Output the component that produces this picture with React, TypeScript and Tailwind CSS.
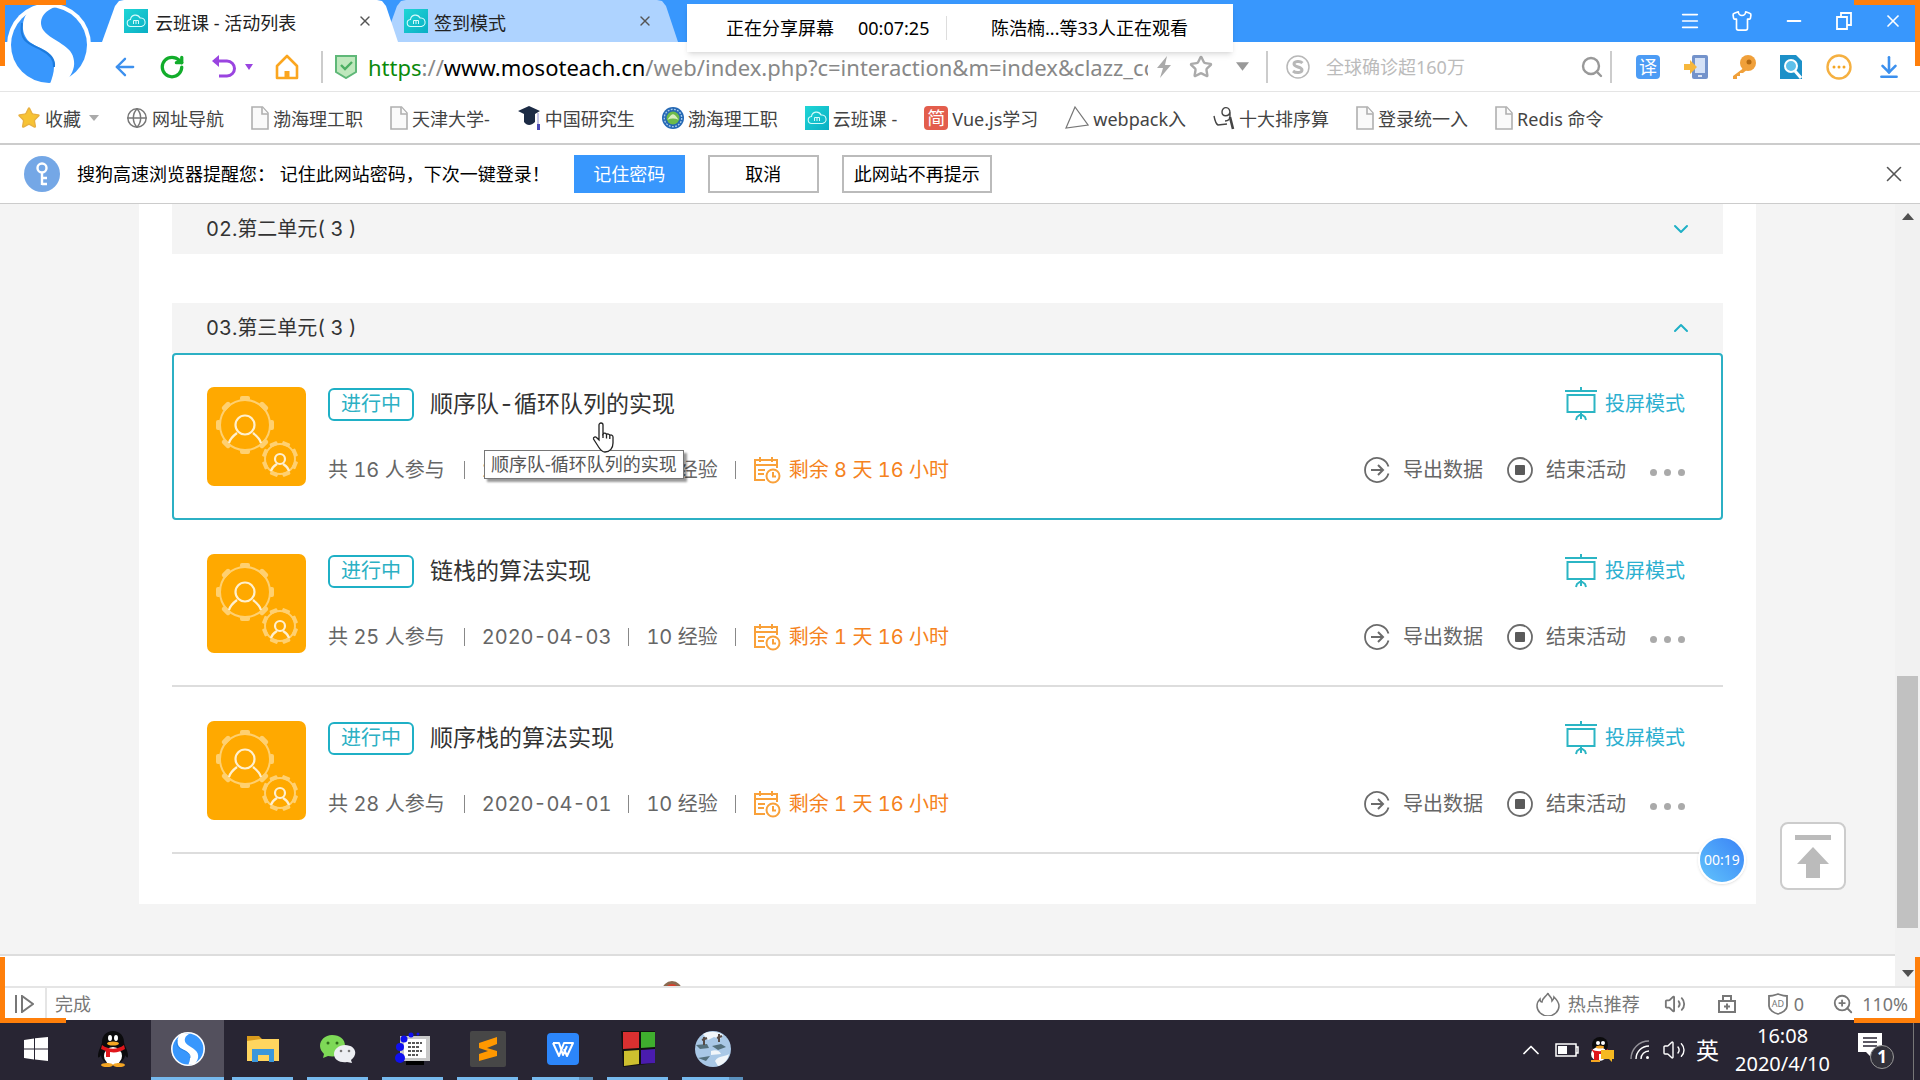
import { useState } from 'react'
import type { ReactNode } from 'react'
import {
  ArrowLeft, ArrowDownToLine, ChevronDown, ChevronUp, Globe, Menu, Minus, RotateCw,
  Search, Shirt, Star, X, ZoomIn, Volume2,
} from 'lucide-react'

type Activity = {
  title: string
  people: number
  date: string
  days: number
}

const activities: Activity[] = [
  { title: '顺序队-循环队列的实现', people: 16, date: '2020-04-10', days: 8 },
  { title: '链栈的算法实现', people: 25, date: '2020-04-03', days: 1 },
  { title: '顺序栈的算法实现', people: 28, date: '2020-04-01', days: 1 },
]

function CloudIcon({ className }: { className: string }) {
  return (
    <svg viewBox="0 0 24 24" className={className}>
      <defs>
        <linearGradient id="cloudBg" x1="0" y1="0" x2="1" y2="1">
          <stop offset="0" stopColor="#1fd6d6" />
          <stop offset="1" stopColor="#0aaec4" />
        </linearGradient>
      </defs>
      <rect width="24" height="24" fill="url(#cloudBg)" />
      <path d="M7 17.500a3.500 3.500 0 0 1-.5-7 5 5 0 0 1 9.500-1.500 4.300 4.300 0 0 1 1.500 8.500z" fill="none" stroke="#d5fbfb" strokeWidth="1.100" />
      <path d="M9.500 15v-3.500h5V15M12 12v3" fill="none" stroke="#d5fbfb" />
    </svg>
  )
}

function DocIcon() {
  return (
    <svg viewBox="0 0 18 24" className="w-[18px] h-6" fill="#fafafa" stroke="#b0b0b0" strokeWidth="1.600">
      <path d="M1 1h10.500L17 7v16H1z" />
      <path d="M11 1v7h6" />
    </svg>
  )
}

function SogouLogo({ className }: { className: string }) {
  return (
    <svg viewBox="0 0 84 84" className={className}>
      <circle cx="42" cy="42" r="42" fill="#fff" />
      <circle cx="42" cy="42" r="38" fill="#3897fd" />
      <path d="M25 4C12 16 14 33 24 40c9 6 24 9 23 24 0 6-2 11-4 17l16-2c5-7 9-13 8-21C66 42 46 39 37 28 31 20 34 9 48 4z" fill="#fff" />
      <path d="M15 20c-3 20 9 21 20 27 8 4 13 9 12 17" fill="none" stroke="#1d7bdd" strokeWidth="2" />
    </svg>
  )
}

function GroupIcon() {
  const teeth = [0, 45, 90, 135, 180, 225, 270, 315]
  return (
    <svg viewBox="0 0 99 99" className="size-[99px] shrink-0" fill="none">
      <rect width="99" height="99" rx="7" fill="#ffa900" />
      <g stroke="#ffd070" strokeWidth="2">
        <circle cx="38" cy="38" r="25" />
        {teeth.map(a => (
          <rect key={a} x="33" y="9" width="10" height="5" rx="2" fill="#ffd070" stroke="none" transform={`rotate(${a} 38 38)`} />
        ))}
        <circle cx="73" cy="72" r="15" />
        {teeth.map(a => (
          <rect key={a} x="69" y="54" width="8" height="4" rx="1" fill="#ffd070" stroke="none" transform={`rotate(${a + 22} 73 72)`} />
        ))}
      </g>
      <g stroke="#fff0cf" strokeWidth="2.200">
        <circle cx="38" cy="38" r="9.500" />
        <path d="M22 56c1-4 4-7 8-10M54 56c-1-4-4-7-8-10" />
        <circle cx="73" cy="72" r="5" />
        <path d="M64 84c1-4 3-5 6-7M82 84c-1-4-3-5-6-7" />
      </g>
    </svg>
  )
}

function ScreenIcon() {
  return (
    <svg viewBox="0 0 32 34" className="w-8 h-[34px]" fill="none" stroke="#2bb5c4" strokeWidth="2">
      <path d="M16 0v4M0 4h32M2.500 8h27v17h-27z" />
      <path d="M16 26v6M11 33l1-3 4-3 4 3 1 3" />
    </svg>
  )
}

function CalendarIcon() {
  return (
    <svg viewBox="0 0 28 28" className="size-7" fill="none" stroke="#f9a13a" strokeWidth="2">
      <path d="M12 24H2V4h22v8M2 9h22M7 1v5M19 1v5M5 14h7M5 18h6" />
      <circle cx="20" cy="20" r="6.500" />
      <path d="M20 16v4.500h3" />
    </svg>
  )
}

function ExportIcon() {
  return (
    <svg viewBox="0 0 26 26" className="size-[26px]" fill="none" stroke="#6b6b6b" strokeWidth="1.800">
      <path d="M24.500 9.500A12 12 0 1 0 24.500 16.500" />
      <path d="M7 13h12M14 8l5 5-5 5" strokeWidth="2" />
    </svg>
  )
}

function StopIcon() {
  return (
    <svg viewBox="0 0 26 26" className="size-[26px]">
      <circle cx="13" cy="13" r="12" fill="none" stroke="#6b6b6b" strokeWidth="1.800" />
      <rect x="8" y="8" width="10" height="10" rx="1" fill="#5a5a5a" />
    </svg>
  )
}

function UnitHeader({ label, open }: { label: string; open?: boolean }) {
  return (
    <button className="flex h-[50px] w-full items-center justify-between bg-[#f4f4f4] pl-[34px] pr-[30px] text-[#333]">
      <span className="font-[Inter,'Noto_Sans_CJK_SC',sans-serif] text-xl tabular-nums">{label}</span>
      {open
        ? <ChevronUp className="size-6 text-[#1fb0c6]" />
        : <ChevronDown className="size-6 text-[#1fb0c6]" />}
    </button>
  )
}

function Divider() {
  return <i className="h-[18px] w-px bg-[#888]" />
}

function ActivityRow({ item, active }: { item: Activity; active?: boolean }) {
  return (
    <li className={active
      ? 'relative flex h-[167px] gap-[22px] rounded-sm border-2 border-[#2cb0c4] pl-[33px] pr-8 pt-8'
      : 'relative flex h-[167px] gap-[22px] border-b-2 border-[#ddd] pl-[35px] pr-[34px] pt-[34px]'}
    >
      <GroupIcon />
      <div className="flex min-w-0 flex-1 flex-col justify-between pb-[31px] font-[Inter,'Noto_Sans_CJK_SC',sans-serif] text-xl tabular-nums text-[#666]">
        <div className="flex h-[34px] items-center justify-between">
          <div className="flex items-center gap-4">
            <span className="flex h-[33px] items-center rounded-md border-2 border-[#1fb0c6] px-[11px] text-[#2cb0c4]">进行中</span>
            <h3 className="text-[23px] text-[#333]">{item.title}</h3>
          </div>
          <button className="mr-1 flex items-center gap-2 text-[#2cb0d0]">
            <ScreenIcon />
            投屏模式
          </button>
        </div>
        <div className="flex h-[34px] items-center justify-between">
          <div className="flex items-center gap-[17px] whitespace-nowrap">
            <span className="pr-[2px]">共 {item.people} 人参与</span>
            <Divider />
            <span>{item.date}</span>
            <Divider />
            <span>10 经验</span>
            <Divider />
            <span className="flex items-center gap-2 text-[#f58220]">
              <CalendarIcon />
              剩余 {item.days} 天 16 小时
            </span>
          </div>
          <div className="mr-1 flex items-center gap-6">
            <button className="flex items-center gap-[13px]"><ExportIcon />导出数据</button>
            <button className="flex items-center gap-[13px]"><StopIcon />结束活动</button>
            <button aria-label="更多" className="flex gap-[7px] pt-1">
              <i className="size-[7px] rounded-full bg-[#aaa]" />
              <i className="size-[7px] rounded-full bg-[#aaa]" />
              <i className="size-[7px] rounded-full bg-[#aaa]" />
            </button>
          </div>
        </div>
      </div>
      {active && (
        <>
          <div className="absolute left-[310px] top-[95px] z-10 border border-[#777] bg-white px-[6px] text-lg leading-[27px] text-[#555] shadow-[3px_3px_2px_rgba(0,0,0,0.4)]">
            {item.title}
          </div>
          <svg viewBox="0 0 22 32" className="absolute left-[418px] top-[67px] z-20 w-[22px] h-8" fill="#fff" stroke="#222" strokeWidth="1.300">
            <path d="M7 18V3a2 2 0 0 1 4 0v9c1-1.500 3-1 3.500.5 1-1 3-.5 3.300.8 1.500-.8 3.200 0 3.200 1.700v6c0 5-3 9-8 9-4 0-5-3-7-6l-4.500-7c-.5-2 2-2.500 3-1.500z" />
            <path d="M11 12v4M14.500 12.500v4M17.800 13.500v3.500" />
          </svg>
        </>
      )}
    </li>
  )
}

const bookmarks: { label: string; icon: ReactNode }[] = [
  { label: '网址导航', icon: <Globe className="size-[22px] text-[#777]" strokeWidth={1.600} /> },
  { label: '渤海理工职', icon: <DocIcon /> },
  { label: '天津大学-', icon: <DocIcon /> },
  {
    label: '中国研究生',
    icon: (
      <svg viewBox="0 0 24 24" className="size-6">
        <path d="M1 5l11-5 11 5-5 3v8c-4 4-8 4-11 0V8z" fill="#1c2b45" />
        <path d="M21 7v11" stroke="#8a8ad0" />
        <path d="M20 18h3v6h-3z" fill="#4b49b5" />
      </svg>
    ),
  },
  {
    label: '渤海理工职',
    icon: (
      <svg viewBox="0 0 24 24" className="size-[22px]">
        <circle cx="12" cy="12" r="12" fill="#2468b4" />
        <circle cx="12" cy="12" r="9.500" fill="none" stroke="#a9cbea" strokeWidth="1.500" strokeDasharray="2 1.500" />
        <circle cx="12" cy="12" r="7" fill="#6dbb4a" />
        <path d="M6 14c3-5 5-6 6-6s3 1 6 6c-4-2-8-2-12 0z" fill="#d8efc0" />
      </svg>
    ),
  },
  { label: '云班课 -', icon: <CloudIcon className="size-6" /> },
  {
    label: 'Vue.js学习',
    icon: <span className="flex size-6 items-center justify-center rounded-sm bg-[#e35d4c] text-lg leading-none text-white">简</span>,
  },
  {
    label: 'webpack入',
    icon: (
      <svg viewBox="0 0 24 24" className="size-6" fill="none" stroke="#777" strokeWidth="1.200">
        <path d="M10 1L1 22l22-3z" />
      </svg>
    ),
  },
  {
    label: '十大排序算',
    icon: (
      <svg viewBox="0 0 22 24" className="w-[22px] h-6" fill="none" stroke="#444" strokeWidth="2">
        <path d="M1 10c1 5 2 8 4 9l9-1" strokeWidth="1.400" />
        <path d="M17 7c0-7-8-7-8-1 0 5 7 5 8 0v4c0 4-3 5-5 5" strokeWidth="1.400" />
        <path d="M17 11l3 12" strokeWidth="2.600" />
      </svg>
    ),
  },
  { label: '登录统一入', icon: <DocIcon /> },
  { label: 'Redis 命令', icon: <DocIcon /> },
]

function TitleBar() {
  return (
    <div className="flex h-[42px] items-center bg-[#3897fd] pl-[102px] text-lg text-[#222]">
      <div className="z-10 flex h-full w-[296px] items-center bg-white pl-[22px] pr-[25px] [clip-path:polygon(0_100%,13px_6px,17px_1px,22px_0,275px_0,280px_1px,284px_6px,100%_100%)]">
        <CloudIcon className="mr-[7px] size-6" />
        <span className="flex-1 pt-1">云班课 - 活动列表</span>
        <button aria-label="关闭标签"><X className="size-4 text-[#555]" /></button>
      </div>
      <div className="-ml-[14px] flex h-full w-[294px] items-center bg-[#aed3ff] pl-5 pr-[25px] [clip-path:polygon(0_100%,13px_6px,17px_1px,22px_0,273px_0,278px_1px,282px_6px,100%_100%)]">
        <CloudIcon className="mr-[6px] size-6" />
        <span className="flex-1 pt-1">签到模式</span>
        <button aria-label="关闭标签"><X className="size-4 text-[#555]" /></button>
      </div>
      <div className="flex flex-1 items-center justify-end gap-[30px] pr-[17px] text-white">
        <button aria-label="菜单"><Menu className="size-[22px]" strokeWidth={1.800} /></button>
        <button aria-label="皮肤"><Shirt className="size-[22px]" strokeWidth={1.800} /></button>
        <button aria-label="最小化"><Minus className="size-[22px]" /></button>
        <button aria-label="还原">
          <svg viewBox="0 0 18 18" className="size-[18px]" fill="none" stroke="currentColor" strokeWidth="1.800">
            <path d="M2 5h10v12H2zM6 5V1h10v12h-4" />
          </svg>
        </button>
        <button aria-label="关闭"><X className="size-5" /></button>
      </div>
    </div>
  )
}

function AddressBar() {
  return (
    <div className="flex h-[50px] items-center border-b border-[#e5e5e5] bg-white pl-[111px] pr-[18px]">
      <div className="flex items-center gap-5">
        <button aria-label="后退"><ArrowLeft className="size-7 text-[#3c90ee]" /></button>
        <button aria-label="刷新"><RotateCw className="size-[26px] text-[#12ad2b]" strokeWidth={3} /></button>
        <button aria-label="恢复" className="ml-[6px] flex items-center gap-[6px]">
          <svg viewBox="0 0 28 26" className="w-7 h-[26px]" fill="none" stroke="#9a44e0" strokeWidth="3">
            <path d="M3 7h13a7.500 7.500 0 0 1 0 15H8" />
            <path d="M8 1v12L1 7z" fill="#9a44e0" stroke="none" />
          </svg>
          <svg viewBox="0 0 8 6" className="w-2 h-[6px]" fill="#9a44e0"><path d="M0 0h8L4 6z" /></svg>
        </button>
        <button aria-label="主页" className="ml-[2px]">
          <svg viewBox="0 0 24 26" className="w-6 h-[26px]" fill="none" stroke="#fba61f" strokeWidth="2.600">
            <path d="M2 12L12 2l10 10v12H2z" strokeLinejoin="round" />
            <path d="M9.500 17h5v7h-5z" fill="#fba61f" stroke="none" />
          </svg>
        </button>
      </div>
      <i className="ml-[22px] mr-3 h-8 w-[2px] bg-[#ccc]" />
      <svg viewBox="0 0 22 24" className="w-[22px] h-6">
        <path d="M1 1h20v16l-10 6-10-6z" fill="#bfe8bd" stroke="#5fb878" strokeWidth="2" />
        <path d="M6 10l4 4 7-7" fill="none" stroke="#4caf62" strokeWidth="2.400" />
      </svg>
      <div
        role="textbox"
        aria-label="地址"
        contentEditable
        suppressContentEditableWarning
        className="ml-[11px] min-w-0 flex-1 overflow-hidden whitespace-nowrap text-[22px] leading-9 text-[#888] outline-none"
      >
        <span className="text-[#0b8a0b]">https</span>://<span className="text-black">www.mosoteach.cn</span>/web/index.php?c=interaction&amp;m=index&amp;clazz_cc
      </div>
      <div className="flex items-center pl-2 text-[#aaa]">
        <svg viewBox="0 0 16 22" className="mr-[17px] w-4 h-[22px]" fill="#aaa"><path d="M11 0L1 12h6l-3 10 11-13H9z" /></svg>
        <Star className="mr-[23px] size-6" strokeWidth={2.400} />
        <svg viewBox="0 0 14 9" className="w-[13px] h-[9px]" fill="#999"><path d="M0 0h14L7 9z" /></svg>
      </div>
      <i className="ml-[17px] mr-[18px] h-8 w-[2px] bg-[#ccc]" />
      <svg viewBox="0 0 24 24" className="size-6" fill="none" stroke="#b8b8b8">
        <circle cx="12" cy="12" r="11" strokeWidth="1.500" />
        <path d="M16.500 8C14 5.500 8 6 8 9c0 3.500 8 2.500 8 6 0 3-6 3.500-9 1" strokeWidth="3" />
      </svg>
      <input
        aria-label="搜索"
        placeholder="全球确诊超160万"
        className="ml-4 w-[244px] text-lg outline-none placeholder:text-[#bbb]"
      />
      <button aria-label="搜索" className="ml-[10px] mr-[6px]"><Search className="size-6 text-[#999]" strokeWidth={2.400} /></button>
      <i className="mr-6 h-8 w-[2px] bg-[#ccc]" />
      <div className="flex items-center gap-6">
        <span className="flex size-6 items-center justify-center rounded-sm bg-[#4c9cf5] text-lg leading-none text-white">译</span>
        <svg viewBox="0 0 24 24" className="size-6">
          <rect x="8" y="0" width="16" height="24" rx="2" fill="#7493cb" />
          <path d="M11 3h10v15H11z" fill="#d5e2f7" />
          <path d="M14 21h4" stroke="#fff" strokeWidth="1.500" />
          <path d="M0 9h6V5l7 7-7 7v-4H0z" fill="#f6b73c" />
        </svg>
        <svg viewBox="0 0 24 24" className="size-6">
          <path d="M13 12L1 21v3h4v-3h3v-3h3l5-4z" fill="#f0a03a" />
          <circle cx="16" cy="8" r="8" fill="#f0a03a" />
          <circle cx="17" cy="7" r="2.500" fill="#b46a12" />
        </svg>
        <svg viewBox="0 0 22 24" className="w-[22px] h-6">
          <path d="M0 0h16l6 6v18H0z" fill="#1c90c8" />
          <circle cx="11" cy="11" r="6" fill="#5ec0ea" stroke="#fff" strokeWidth="2" />
          <path d="M15 16l6 7" stroke="#fff" strokeWidth="3" />
        </svg>
        <svg viewBox="0 0 26 26" className="size-[26px]" fill="#f5a623">
          <circle cx="13" cy="13" r="11.500" fill="none" stroke="#f5b041" strokeWidth="2.400" />
          <circle cx="8" cy="13" r="1.500" /><circle cx="13" cy="13" r="1.500" /><circle cx="18" cy="13" r="1.500" />
        </svg>
        <ArrowDownToLine className="size-[26px] text-[#3c90ee]" strokeWidth={2.400} />
      </div>
    </div>
  )
}

function BookmarkBar() {
  return (
    <nav className="flex h-[53px] items-center gap-[27px] whitespace-nowrap border-b-2 border-[#ccc] bg-white pl-[17px] text-lg text-[#444]">
      <button className="flex items-center gap-1">
        <Star className="size-6 fill-[#f7c334] text-[#e8b040]" strokeWidth={1.400} />
        <span className="pt-[2px]">收藏</span>
        <svg viewBox="0 0 10 6" className="ml-1 w-[10px] h-[6px]" fill="#aaa"><path d="M0 0h10L5 6z" /></svg>
      </button>
      {bookmarks.map((b, i) => (
        <a key={i} href="#" className="flex items-center gap-1">
          {b.icon}
          <span className="pt-[2px]">{b.label}</span>
        </a>
      ))}
    </nav>
  )
}

function PasswordNotice({ onClose }: { onClose: () => void }) {
  return (
    <div className="flex h-[59px] items-center border-b border-[#ccc] bg-white pl-6 pr-[15px] text-lg text-black">
      <svg viewBox="0 0 36 36" className="mr-[17px] size-9" fill="none" stroke="#fff" strokeWidth="2.400">
        <circle cx="18" cy="18" r="18" fill="#74a7e6" stroke="none" />
        <circle cx="18" cy="12" r="4.500" />
        <path d="M18 17v12M18 22h5M18 28h5" />
      </svg>
      <p>搜狗高速浏览器提醒您： 记住此网站密码，下次一键登录！</p>
      <div className="ml-6 flex flex-1 gap-[23px]">
        <button onClick={onClose} className="h-[38px] w-[111px] bg-[#3897fd] text-white">记住密码</button>
        <button onClick={onClose} className="h-[38px] w-[111px] border-2 border-[#bbb]">取消</button>
        <button onClick={onClose} className="h-[38px] border-2 border-[#bbb] px-[10px]">此网站不再提示</button>
      </div>
      <button aria-label="关闭提示" onClick={onClose} className="-mr-[2px]"><X className="size-[26px] text-[#555]" strokeWidth={1.500} /></button>
    </div>
  )
}

function StatusBar() {
  return (
    <div className="flex h-[34px] items-center border-t-2 border-[#e5e5e5] bg-white px-3 text-lg text-[#777]">
      <svg viewBox="0 0 20 18" className="ml-[2px] mr-[11px] w-5 h-[18px]" fill="none" stroke="#777" strokeWidth="2">
        <path d="M2 0v18M8 1v16l11-8z" />
      </svg>
      <i className="mr-2 h-full w-[2px] bg-[#e5e5e5]" />
      <span className="flex-1">完成</span>
      <div className="flex items-center gap-6">
        <span className="flex items-center gap-2">
          <svg viewBox="0 0 24 24" className="size-6" fill="none" stroke="#777" strokeWidth="1.500">
            <path d="M12 1c0 3 4 3 4 8 1-1 2-2 2-4 3 3 5 6 5 9a10 9 0 0 1-22 0c0-3 1-5 3-7 0 2 1 3 2 3 0-4 4-5 6-9z" />
          </svg>
          热点推荐
        </span>
        <Volume2 className="size-[22px]" />
        <svg viewBox="0 0 18 18" className="mx-2 size-[18px]" fill="none" stroke="#777" strokeWidth="2">
          <path d="M1 6h16v11H1zM5 6V1h8v5M9 8.500v6M6 11.500h6" />
        </svg>
        <span className="mr-1 flex items-center gap-[6px]">
          <svg viewBox="0 0 20 22" className="w-5 h-[22px]">
            <path d="M1 3c4 0 6-1 9-2 3 1 5 2 9 2v10c0 4-5 7-9 8-4-1-9-4-9-8z" fill="none" stroke="#777" strokeWidth="1.800" />
            <text x="10" y="14" fontSize="9" textAnchor="middle" fill="#777">AD</text>
          </svg>
          0
        </span>
        <span className="flex items-center gap-2"><ZoomIn className="size-[22px]" />110%</span>
      </div>
    </div>
  )
}

const apps: { name: string; bar: string; icon: ReactNode }[] = [
  {
    name: '开始',
    bar: '',
    icon: (
      <svg viewBox="0 0 24 24" className="mr-[3px] size-6" fill="#fff">
        <path d="M0 3l10-1.500v10H0zM11 1.300L24 0v11.500H11zM0 12.500h10v10L0 21zM11 12.500h13V24l-13-1.500z" />
      </svg>
    ),
  },
  {
    name: 'QQ',
    bar: '',
    icon: (
      <svg viewBox="0 0 30 36" className="w-[30px] h-9">
        <path d="M15 0C8 0 4 5 4 11c0 3-4 8-4 14 0 3 2 1 3-1 0 4 4 9 12 9s12-5 12-9c1 2 3 4 3 1 0-6-4-11-4-14 0-6-4-11-11-11z" fill="#0b0b0d" />
        <ellipse cx="15" cy="25" rx="9" ry="9" fill="#fff" />
        <ellipse cx="12" cy="7" rx="2" ry="3" fill="#fff" /><ellipse cx="18" cy="7" rx="2" ry="3" fill="#fff" />
        <ellipse cx="15" cy="12.500" rx="6" ry="2" fill="#f5a623" />
        <path d="M4 14c7 5 15 5 22 0l1 4c-5 3-10 4-15 3v5H8v-6l-5-2z" fill="#e0161b" />
        <ellipse cx="9" cy="34" rx="6" ry="2" fill="#f5a623" /><ellipse cx="21" cy="34" rx="6" ry="2" fill="#f5a623" />
      </svg>
    ),
  },
  { name: '搜狗浏览器', bar: 'w-full bg-[#76b9ed]', icon: <SogouLogo className="size-[34px]" /> },
  {
    name: '文件资源管理器',
    bar: 'w-[61px] bg-[#76b9ed]',
    icon: (
      <svg viewBox="0 0 32 28" className="w-8 h-7">
        <path d="M0 1h12l3 3h17v22H0z" fill="#d99b1c" />
        <path d="M0 6l14-2h18v22H0z" fill="#ffd55f" />
        <path d="M5 27V14h22v13h-5v-7H11v7z" fill="#3a97dc" />
      </svg>
    ),
  },
  {
    name: '微信',
    bar: 'w-[61px] bg-[#76b9ed]',
    icon: (
      <svg viewBox="0 0 36 28" className="w-9 h-7">
        <path d="M12 0C5 0 0 5 0 11c0 3 2 6 4 8l-1 4 5-2c10 2 17-3 17-10S20 0 12 0z" fill="#7ed957" />
        <circle cx="8" cy="8" r="1.500" fill="#2f6e1b" /><circle cx="17" cy="8" r="1.500" fill="#2f6e1b" />
        <path d="M25 10c-6 0-11 4-11 9 0 6 6 9 13 8l5 1-1-3c8-6 4-15-6-15z" fill="#eceef2" />
        <circle cx="21" cy="16" r="1.300" fill="#777" /><circle cx="29" cy="16" r="1.300" fill="#777" />
      </svg>
    ),
  },
  {
    name: '编辑器',
    bar: 'w-[61px] bg-[#76b9ed]',
    icon: (
      <svg viewBox="0 0 36 34" className="w-9 h-[34px]">
        <rect x="5" y="4" width="30" height="25" fill="#c8c8c8" />
        <rect x="9" y="7" width="22" height="19" fill="#fff" />
        <path d="M13 11h14M13 15h12M13 19h14M13 23h10" stroke="#222" strokeWidth="1.400" strokeDasharray="3 1" />
        <path d="M11 31h18" stroke="#000" strokeWidth="4" />
        <g fill="#1010ee">
          <circle cx="5" cy="26" r="5" /><circle cx="5" cy="15" r="4" /><circle cx="9" cy="7" r="3.500" /><circle cx="16" cy="3" r="2.500" /><circle cx="23" cy="2" r="1.500" />
        </g>
      </svg>
    ),
  },
  {
    name: 'Sublime',
    bar: 'w-[61px] bg-[#76b9ed]',
    icon: (
      <svg viewBox="0 0 36 36" className="size-9">
        <rect width="36" height="36" rx="2" fill="#474747" />
        <path d="M9 12l18-6v7l-10 4 10 3v5L9 30v-7l9-3-9-3z" fill="#ff9800" />
      </svg>
    ),
  },
  {
    name: 'WPS',
    bar: 'w-[61px] bg-linear-to-r from-[#76b9ed] from-77% to-[#5a90bd] to-77%',
    icon: (
      <svg viewBox="0 0 32 32" className="size-8">
        <rect width="32" height="32" rx="4" fill="#2c86fa" />
        <path d="M6 10h6l4 12 4-9M6 10l6 13 5-13h9l-6 13-3-7" fill="none" stroke="#fff" strokeWidth="2" strokeLinejoin="round" />
      </svg>
    ),
  },
  {
    name: '红蜘蛛',
    bar: 'w-[61px] bg-[#76b9ed]',
    icon: (
      <svg viewBox="0 0 34 36" className="w-[34px] h-9">
        <path d="M0 0h34v32L2 36z" fill="#111" />
        <path d="M2 1h16v16L2 18z" fill="#d93030" />
        <path d="M20 1h14v15l-14 1z" fill="#3fae2e" />
        <path d="M3 20l15-1v14L3 35z" fill="#cdbf2f" />
        <path d="M20 19l14-1v14l-14 1z" fill="#4a1cae" />
      </svg>
    ),
  },
  {
    name: '桌面',
    bar: 'w-[61px] bg-linear-to-r from-[#76b9ed] from-77% to-[#5a90bd] to-77%',
    icon: (
      <svg viewBox="0 0 36 36" className="size-9">
        <circle cx="18" cy="18" r="18" fill="#a9c8e6" />
        <path d="M8 3c6-3 14-3 20 1l-3 4-6-2-6 3zM16 20c5-2 9 0 10 3l-10 1zM20 30c4-6 10-4 14-7-1 6-5 10-11 12z" fill="#f1f6fa" />
        <path d="M1 14l11-1 2 4-9 1zM17 15l9-2 5 3-8 3zM3 27l12-2-4 5z" fill="#54707c" />
        <path d="M9 6v8M24 3v8M7 9l5-2M22 7l5-2" stroke="#574b45" strokeWidth="2" />
      </svg>
    ),
  },
]

function Taskbar() {
  return (
    <footer className="flex h-[60px] bg-[#282533] text-white">
      {apps.map((a, i) => (
        <button
          key={a.name}
          aria-label={a.name}
          className={i === 2
            ? 'mx-px flex w-[73px] flex-col items-center bg-[#53505d]'
            : 'flex w-[75px] flex-col items-center'}
        >
          <span className="flex flex-1 items-center">{a.icon}</span>
          <span className={`h-[3px] ${a.bar}`} />
        </button>
      ))}
      <div className="flex flex-1 items-center justify-end">
        <ChevronUp className="mr-[10px] size-7" strokeWidth={1.500} />
        <svg viewBox="0 0 24 14" className="mr-[10px] w-6 h-[14px]">
          <path d="M1 1h20v12H1zM21 4h2v6h-2" fill="none" stroke="#fff" strokeWidth="1.500" />
          <path d="M3 3h9v8H3z" fill="#fff" />
        </svg>
        <svg viewBox="0 0 26 26" className="mr-[15px] size-[26px]">
          <ellipse cx="11" cy="8" rx="8" ry="8" fill="#0b0b0d" />
          <ellipse cx="10" cy="17" rx="8" ry="7" fill="#fff" />
          <path d="M2 12c5 3 12 3 17 0v4c-3 1-6 1-9 1v6H5v-7z" fill="#e0161b" />
          <circle cx="9" cy="6" r="2" fill="#fff" /><circle cx="14" cy="6" r="2" fill="#fff" />
          <ellipse cx="11" cy="10" rx="4" ry="1.500" fill="#f5a623" />
          <path d="M2 23h9v2H2z" fill="#f5a623" />
          <path d="M12 13h13v9h-2v3l-3-3h-8z" fill="#f5b921" />
        </svg>
        <svg viewBox="0 0 20 20" className="mr-3 size-5" fill="none" stroke="#fff" strokeWidth="1.400">
          <path d="M1 19A18 18 0 0 1 19 1" opacity="0.500" />
          <path d="M6 19A13 13 0 0 1 19 6M11 19a8 8 0 0 1 8-8" />
          <circle cx="17.500" cy="17.500" r="1.500" fill="#fff" stroke="none" />
        </svg>
        <Volume2 className="mr-[10px] size-6" strokeWidth={1.400} />
        <span className="mr-4 text-[23px]">英</span>
        <div className="text-center text-xl leading-7">
          <div>16:08</div>
          <div>2020/4/10</div>
        </div>
        <svg viewBox="0 0 36 38" className="ml-7 mr-[19px] w-9 h-[38px]">
          <path d="M0 2h24v19H13v5l-5-5H0z" fill="#fff" />
          <path d="M5 7h14M5 11h14M5 15h14" stroke="#282533" strokeWidth="1.400" />
          <circle cx="24" cy="26" r="11.500" fill="#32313a" stroke="#999" />
          <text x="24" y="32" fontSize="17" fontWeight="700" textAnchor="middle" fill="#fff">1</text>
        </svg>
        <i className="mr-[6px] h-full w-px bg-[#777]" />
      </div>
    </footer>
  )
}

export default function App() {
  const [notice, setNotice] = useState(true)

  return (
    <div className="relative flex h-screen flex-col overflow-hidden bg-white font-['Noto_Sans','Noto_Sans_CJK_SC',sans-serif] leading-tight">
      <TitleBar />
      <AddressBar />
      <BookmarkBar />
      {notice && <PasswordNotice onClose={() => setNotice(false)} />}

      <div className="flex min-h-0 flex-1">
        <main className="relative min-w-0 flex-1 overflow-hidden bg-[#f4f4f4]">
          <div className="mx-auto mb-[50px] flex max-w-[1617px] flex-col bg-white px-[33px] pb-[50px]">
            <UnitHeader label="02.第二单元( 3 )" />
            <div className="mt-[49px]">
              <UnitHeader label="03.第三单元( 3 )" open />
              <ul>
                {activities.map((a, i) => <ActivityRow key={a.title} item={a} active={i === 0} />)}
              </ul>
            </div>
          </div>
          <div className="h-20 border-t-2 border-[#ddd] bg-white pl-[662px] pt-[25px]">
            <svg viewBox="0 0 20 20" className="size-5">
              <circle cx="10" cy="10" r="10" fill="#8a6a50" />
              <circle cx="10" cy="10" r="7" fill="#d8402c" />
            </svg>
          </div>
        </main>
        <div className="flex w-[25px] flex-col items-center bg-[#f1f1f1] py-2 text-[#505050]">
          <svg viewBox="0 0 12 8" className="w-3 h-2" fill="currentColor"><path d="M0 8l6-7 6 7z" /></svg>
          <div className="mt-[456px] h-[252px] w-[21px] bg-[#c1c1c1]" />
          <svg viewBox="0 0 12 8" className="mt-auto w-3 h-2" fill="currentColor"><path d="M0 0l6 7 6-7z" /></svg>
        </div>
      </div>

      <StatusBar />
      <Taskbar />

      {/* floating page widgets */}
      <div className="absolute bottom-[196px] right-[174px] flex size-12 items-center justify-center rounded-full border-2 border-white bg-linear-to-tr from-[#62c3fb] to-[#3c82f6] text-sm text-white shadow">
        00:19
      </div>
      <button aria-label="返回顶部" className="absolute bottom-[190px] right-[74px] flex h-[68px] w-[66px] items-center justify-center rounded-lg border-2 border-[#ccc] bg-white">
        <svg viewBox="0 0 36 44" className="w-9 h-11" fill="#bbb">
          <path d="M0 1h36v5H0zM18 13l16 17h-9v14H11V30H2z" />
        </svg>
      </button>

      <SogouLogo className="absolute left-[7px] top-[3px] z-20 size-[84px]" />

      {/* screen sharing bar */}
      <div className="absolute left-[687px] top-1 z-30 flex h-12 w-[546px] items-center bg-white pl-[39px] text-lg text-black shadow-md">
        <span>正在分享屏幕</span>
        <span className="ml-6 w-[72px]">00:07:25</span>
        <i className="ml-4 mr-11 h-6 w-px bg-[#ddd]" />
        <span>陈浩楠...等33人正在观看</span>
      </div>

      {/* capture frame corners */}
      <i className="absolute left-0 top-0 z-40 size-[66px] border-l-[5px] border-t-[5px] border-[#ff7f0a]" />
      <i className="absolute right-0 top-0 z-40 size-[66px] border-r-[5px] border-t-[5px] border-[#ff7f0a]" />
      <i className="absolute bottom-[57px] left-0 z-40 size-[66px] border-b-[5px] border-l-[5px] border-[#ff7f0a]" />
      <i className="absolute bottom-[57px] right-0 z-40 size-[66px] border-b-[5px] border-r-[5px] border-[#ff7f0a]" />
    </div>
  )
}
